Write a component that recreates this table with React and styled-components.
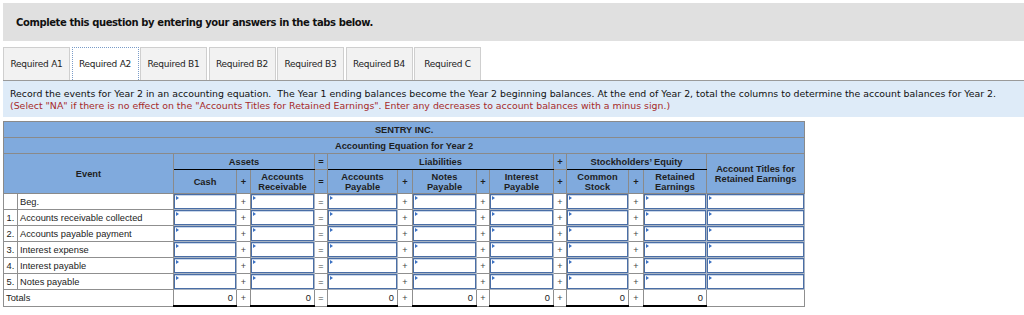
import React from "react";
import styled, { createGlobalStyle } from "styled-components";

const GlobalStyle = createGlobalStyle`
  html, body { margin: 0; padding: 0; background: #fff; }
  body { font-family: "DejaVu Sans", Verdana, sans-serif; color: #111; }
`;

const Page = styled.div`
  padding: 3px 0 0 3px;
  width: 1021px;
`;

const Banner = styled.div`
  height: 38px;
  background: #e0e0e0;
  display: flex;
  align-items: center;
  padding-left: 13px;
  font-size: 10px;
  letter-spacing: -0.4px;
  font-weight: bold;
  color: #111;
`;

const TabBar = styled.div`
  margin-top: 6px;
  display: flex;
  gap: 1.5px;
  border-bottom: 1px solid #9a9a9a;
`;

const Tab = styled.div`
  box-sizing: border-box;
  width: 67px;
  height: 33px;
  display: flex;
  align-items: center;
  justify-content: center;
  font-size: 9px;
  letter-spacing: -0.25px;
  color: #222;
  background: ${(p) => (p.$active ? "#fff" : "#f2f2f2")};
  border: 1px ${(p) => (p.$active ? "dotted #7a9cc8" : "solid #cfcfcf")};
  border-bottom: none;
`;

const Instructions = styled.div`
  background: #deebf8;
  height: 36px;
  box-sizing: border-box;
  padding: 7px 7px 0;
  font-size: 9.4px;
  line-height: 12px;
  color: #111;
`;

const Note = styled.span`
  color: #a62a2a;
`;

const Sheet = styled.table`
  margin-top: 4px;
  border-collapse: collapse;
  table-layout: fixed;
  width: 801px;
  font-family: "Liberation Sans", Arial, sans-serif;
  font-size: 9.3px;
  color: #222;
`;

const Head = styled.th`
  background: #80aadd;
  border: 1px solid #8a8a8a;
  ${(p) => p.$rule && "border-bottom: 1px solid #000;"}
  height: ${(p) => p.$h || 15}px;
  padding: 0 2px;
  font-weight: bold;
  text-align: center;
  vertical-align: middle;
  line-height: 10px;
  color: #1e1e1e;
`;

const Cell = styled.td`
  border: 1px solid #8f8f8f;
  height: 15px;
  padding: 0 ${(p) => (p.$num ? 3 : 2)}px;
  text-align: ${(p) => (p.$num ? "right" : p.$center ? "center" : "left")};
  white-space: nowrap;
  overflow: hidden;
  ${(p) => p.$total && "border-bottom: 2px solid #000;"}
`;

const SignCell = styled.td`
  border: 1px solid #8f8f8f;
  height: 15px;
  padding: 0;
  text-align: center;
  font-size: 9px;
  color: #444;
`;

const EntryCell = styled.td`
  border: 1px solid #a9b4c2;
  padding: 0;
  height: 15px;
`;

const Entry = styled.div`
  position: relative;
  box-sizing: border-box;
  height: 15px;
  background: #fff;
  border: 1px solid #4a6ea6;
  border-top-width: 1.5px;
  box-shadow: inset 0 1px 0 #c8d6ea;
  &::before {
    content: "";
    position: absolute;
    left: 1px;
    top: 1px;
    border-top: 2px solid transparent;
    border-bottom: 2px solid transparent;
    border-left: 3px solid #3a70c2;
  }
`;

const Nav = styled.div`
  display: flex;
  justify-content: center;
  gap: 16px;
  margin-top: 8px;
  padding-right: 3px;
`;

/* Previous / next tab buttons; only their top edge falls inside the view */
const NavButton = styled.button`
  width: 117px;
  height: 30px;
  box-sizing: border-box;
  border: 1px solid #3f74bd;
  border-radius: 0 0 3px 3px;
  background: #fff;
  padding: 0;
`;

const widths = [14, 156, 63, 14, 64, 13, 70, 15, 64, 13, 64, 13, 62, 15, 63, 98];

const tabs = [
  "Required A1",
  "Required A2",
  "Required B1",
  "Required B2",
  "Required B3",
  "Required B4",
  "Required C",
];

const events = [
  ["", "Beg."],
  ["1.", "Accounts receivable collected"],
  ["2.", "Accounts payable payment"],
  ["3.", "Interest expense"],
  ["4.", "Interest payable"],
  ["5.", "Notes payable"],
];

const signs = ["+", "=", "+", "+", "+", "+"];

function EntryRow({ num, label }) {
  const cells = [];
  for (let i = 0; i < 7; i++) {
    cells.push(
      <EntryCell key={`e${i}`}>
        <Entry />
      </EntryCell>
    );
    if (i < 6) cells.push(<SignCell key={`s${i}`}>{signs[i]}</SignCell>);
  }
  return (
    <tr>
      <Cell $center>{num}</Cell>
      <Cell>{label}</Cell>
      {cells}
      <EntryCell>
        <Entry />
      </EntryCell>
    </tr>
  );
}

function TotalsRow() {
  const cells = [];
  for (let i = 0; i < 7; i++) {
    cells.push(
      <Cell key={`t${i}`} $num $total>
        0
      </Cell>
    );
    if (i < 6) cells.push(<SignCell key={`s${i}`}>{signs[i]}</SignCell>);
  }
  return (
    <tr>
      <Cell colSpan={2}>Totals</Cell>
      {cells}
      <Cell />
    </tr>
  );
}

export default function App() {
  return (
    <>
      <GlobalStyle />
      <Page>
        <Banner>Complete this question by entering your answers in the tabs below.</Banner>
        <TabBar>
          {tabs.map((t, i) => (
            <Tab key={t} $active={i === 1}>
              {t}
            </Tab>
          ))}
        </TabBar>
        <Instructions>
          Record the events for Year 2 in an accounting equation.&nbsp; The Year 1 ending balances
          become the Year 2 beginning balances. At the end of Year 2, total the columns to determine
          the account balances for Year 2.
          <br />
          <Note>
            (Select "NA" if there is no effect on the "Accounts Titles for Retained Earnings". Enter
            any decreases to account balances with a minus sign.)
          </Note>
        </Instructions>
        <Sheet>
          <colgroup>
            {widths.map((w, i) => (
              <col key={i} style={{ width: w }} />
            ))}
          </colgroup>
          <thead>
            <tr>
              <Head colSpan={16}>SENTRY INC.</Head>
            </tr>
            <tr>
              <Head colSpan={16}>Accounting Equation for Year 2</Head>
            </tr>
            <tr>
              <Head colSpan={2} rowSpan={2}>
                Event
              </Head>
              <Head colSpan={3} $rule>
                Assets
              </Head>
              <Head>=</Head>
              <Head colSpan={5} $rule>
                Liabilities
              </Head>
              <Head>+</Head>
              <Head colSpan={3} $rule>
                Stockholders’ Equity
              </Head>
              <Head rowSpan={2}>
                Account Titles for
                <br />
                Retained Earnings
              </Head>
            </tr>
            <tr>
              <Head $h={23}>Cash</Head>
              <Head>+</Head>
              <Head>
                Accounts
                <br />
                Receivable
              </Head>
              <Head>=</Head>
              <Head>
                Accounts
                <br />
                Payable
              </Head>
              <Head>+</Head>
              <Head>
                Notes
                <br />
                Payable
              </Head>
              <Head>+</Head>
              <Head>
                Interest
                <br />
                Payable
              </Head>
              <Head>+</Head>
              <Head>
                Common
                <br />
                Stock
              </Head>
              <Head>+</Head>
              <Head>
                Retained
                <br />
                Earnings
              </Head>
            </tr>
          </thead>
          <tbody>
            {events.map(([n, l]) => (
              <EntryRow key={l} num={n} label={l} />
            ))}
            <TotalsRow />
          </tbody>
        </Sheet>
        <Nav>
          <NavButton aria-label="Previous tab" />
          <NavButton aria-label="Next tab" />
        </Nav>
      </Page>
    </>
  );
}
